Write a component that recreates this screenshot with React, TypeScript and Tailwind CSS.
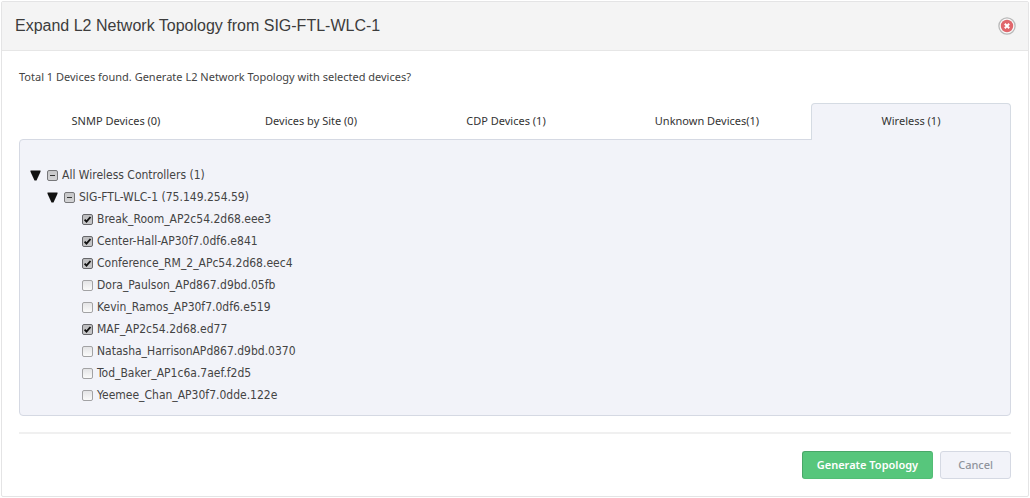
import { useState } from "react";

type Mark = "on" | "off" | "mixed";

const TABS = [
  "SNMP Devices (0)",
  "Devices by Site (0)",
  "CDP Devices (1)",
  "Unknown Devices(1)",
  "Wireless (1)",
];

const ACCESS_POINTS = [
  { name: "Break_Room_AP2c54.2d68.eee3", selected: true },
  { name: "Center-Hall-AP30f7.0df6.e841", selected: true },
  { name: "Conference_RM_2_APc54.2d68.eec4", selected: true },
  { name: "Dora_Paulson_APd867.d9bd.05fb", selected: false },
  { name: "Kevin_Ramos_AP30f7.0df6.e519", selected: false },
  { name: "MAF_AP2c54.2d68.ed77", selected: true },
  { name: "Natasha_HarrisonAPd867.d9bd.0370", selected: false },
  { name: "Tod_Baker_AP1c6a.7aef.f2d5", selected: false },
  { name: "Yeemee_Chan_AP30f7.0dde.122e", selected: false },
];

function TreeCheckbox({ label, mark, onToggle }: { label: string; mark: Mark; onToggle: () => void }) {
  return (
    <label className="flex items-center gap-1 whitespace-nowrap">
      <span className="grid size-[11px]">
        <input
          type="checkbox"
          checked={mark === "on"}
          ref={(el) => {
            if (el) el.indeterminate = mark === "mixed";
          }}
          onChange={onToggle}
          className="col-start-1 row-start-1 size-[11px] appearance-none rounded-[2px] border border-[#a2a2a4] bg-linear-to-b from-[#e4e4e6] to-[#fafafa] checked:border-[#66666a] checked:from-[#bcbcbe] checked:to-[#c8c8ca] indeterminate:border-[#77777a] indeterminate:from-[#c6c6c8] indeterminate:to-[#d4d4d6]"
        />
        {mark === "on" && (
          <svg viewBox="0 0 11 11" className="pointer-events-none col-start-1 row-start-1 size-[11px]" aria-hidden="true">
            <path d="M2.6 5.6 4.5 7.6 8.5 3" fill="none" stroke="#111" strokeWidth="1.9" />
          </svg>
        )}
        {mark === "mixed" && (
          <svg viewBox="0 0 11 11" className="pointer-events-none col-start-1 row-start-1 size-[11px]" aria-hidden="true">
            <path d="M3 5.5h5" stroke="#333" strokeWidth="1" />
          </svg>
        )}
      </span>
      {label}
    </label>
  );
}

function Expander({ label, open, onClick }: { label: string; open: boolean; onClick: () => void }) {
  return (
    <button type="button" aria-label={label} aria-expanded={open} onClick={onClick}>
      <svg viewBox="0 0 11 11" className={open ? "size-[11px]" : "size-[11px] -rotate-90"} aria-hidden="true">
        <path d="M.5 .5h10v1.3L6.5 10.5h-2L.5 1.8z" fill="#111" />
      </svg>
    </button>
  );
}

export default function App() {
  const [activeTab, setActiveTab] = useState(4);
  const [points, setPoints] = useState(ACCESS_POINTS);
  const [rootOpen, setRootOpen] = useState(true);
  const [controllerOpen, setControllerOpen] = useState(true);

  const count = points.filter((p) => p.selected).length;
  const groupMark: Mark = count === 0 ? "off" : count === points.length ? "on" : "mixed";
  const toggleAll = () => setPoints(points.map((p) => ({ ...p, selected: groupMark !== "on" })));
  const togglePoint = (name: string) =>
    setPoints(points.map((p) => (p.name === name ? { ...p, selected: !p.selected } : p)));

  return (
    <div className="bg-white p-px font-['Noto_Sans',sans-serif] text-[11px] text-[#444]">
      <section role="dialog" aria-labelledby="dialog-title" className="rounded-[2px] border border-[#e4e4e5] bg-white">
        <header className="flex h-[49px] items-center justify-between border-b border-[#e6e6e6] bg-[#f4f4f4] pr-3 pl-[13px]">
          <h1 id="dialog-title" className="font-['Liberation_Sans',Arial,sans-serif] text-base text-[#3c3c3c]">
            Expand L2 Network Topology from SIG-FTL-WLC-1
          </h1>
          <button type="button" aria-label="Close">
            <svg viewBox="0 0 18 18" className="size-[18px]" aria-hidden="true">
              <circle cx="9" cy="9" r="8.1" fill="#f8f8f8" stroke="#b9b9b9" strokeWidth="1.3" />
              <circle cx="9" cy="9" r="6.2" fill="#e0666b" />
              <path d="M6.8 6.8 11.2 11.2M11.2 6.8 6.8 11.2" stroke="#fff" strokeWidth="2" />
            </svg>
          </button>
        </header>

        <div className="px-[17px] pt-4 pb-[17px]">
          <p className="leading-5">Total 1 Devices found. Generate L2 Network Topology with selected devices?</p>

          <div role="tablist" className="mt-4 grid grid-cols-[194fr_196fr_194fr_208fr_200fr]">
            {TABS.map((tab, i) => (
              <button
                key={tab}
                type="button"
                role="tab"
                aria-selected={i === activeTab}
                onClick={() => setActiveTab(i)}
                className={
                  i === activeTab
                    ? "z-10 -mb-px h-[37px] rounded-t border border-b-0 border-[#d5dbe3] bg-[#f2f3f9] pb-0.5 text-[#333]"
                    : "h-9 text-[#333]"
                }
              >
                {tab}
              </button>
            ))}
          </div>

          <div
            role="tabpanel"
            className="min-h-[277px] rounded-b rounded-tl border border-[#d5d9e3] bg-[#f2f3f9] px-2.5 pt-6 pb-2 font-['DejaVu_Sans_Condensed',Tahoma,sans-serif] text-xs leading-[22px]"
          >
            {activeTab === 4 && (
              <ul>
                <li>
                  <div className="flex items-center gap-1.5">
                    <Expander label="All Wireless Controllers" open={rootOpen} onClick={() => setRootOpen(!rootOpen)} />
                    <TreeCheckbox label="All Wireless Controllers (1)" mark={groupMark} onToggle={toggleAll} />
                  </div>
                  {rootOpen && (
                    <ul className="pl-[17px]">
                      <li>
                        <div className="flex items-center gap-1.5">
                          <Expander
                            label="SIG-FTL-WLC-1"
                            open={controllerOpen}
                            onClick={() => setControllerOpen(!controllerOpen)}
                          />
                          <TreeCheckbox label="SIG-FTL-WLC-1 (75.149.254.59)" mark={groupMark} onToggle={toggleAll} />
                        </div>
                        {controllerOpen && (
                          <ul className="pl-[35px]">
                            {points.map((p) => (
                              <li key={p.name}>
                                <TreeCheckbox
                                  label={p.name}
                                  mark={p.selected ? "on" : "off"}
                                  onToggle={() => togglePoint(p.name)}
                                />
                              </li>
                            ))}
                          </ul>
                        )}
                      </li>
                    </ul>
                  )}
                </li>
              </ul>
            )}
          </div>

          <footer className="mt-4 flex justify-end gap-[7px] border-t-2 border-[#f0f0f0] pt-[17px]">
            <button
              type="button"
              className="h-7 rounded-[3px] border border-[#53bd75] border-t-[#49a768] border-l-[#49a768] bg-[#57c67c] px-3.5 font-semibold text-white"
            >
              Generate Topology
            </button>
            <button
              type="button"
              className="h-7 rounded-[3px] border border-[#d5d9e3] bg-[#f2f3f9] px-[17px] font-medium text-[#8f939c]"
            >
              Cancel
            </button>
          </footer>
        </div>
      </section>
    </div>
  );
}
